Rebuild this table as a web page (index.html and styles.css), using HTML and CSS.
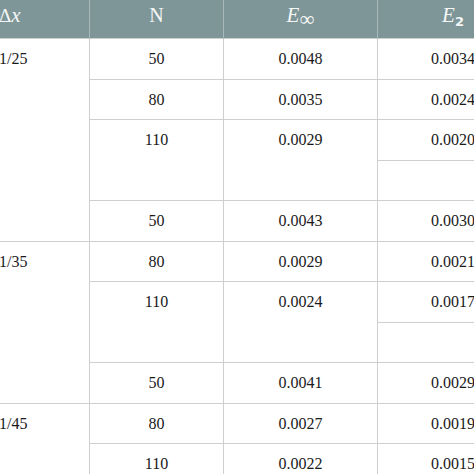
FILE: index.html
```html
<!DOCTYPE html>
<html>
<head>
<meta charset="utf-8">
<link rel="stylesheet" href="styles.css">
</head>
<body>
<div class="frame">
<table class="grid">
  <colgroup>
    <col class="c1"><col class="c2"><col class="c3"><col class="c4">
  </colgroup>
  <thead>
    <tr>
      <th class="left"><span class="delta">Δ</span><i class="var">x</i></th>
      <th>N</th>
      <th><i class="var">E</i><sub class="inf">∞</sub></th>
      <th><i class="var">E</i><sub class="two">2</sub></th>
    </tr>
  </thead>
  <tbody>
    <tr><td class="left" rowspan="5">1/25</td><td>50</td><td>0.0048</td><td>0.0034</td></tr>
    <tr><td>80</td><td>0.0035</td><td>0.0024</td></tr>
    <tr><td rowspan="2">110</td><td rowspan="2">0.0029</td><td>0.0020</td></tr>
    <tr><td></td></tr>
    <tr><td>50</td><td>0.0043</td><td>0.0030</td></tr>
    <tr><td class="left" rowspan="4">1/35</td><td>80</td><td>0.0029</td><td>0.0021</td></tr>
    <tr><td rowspan="2">110</td><td rowspan="2">0.0024</td><td>0.0017</td></tr>
    <tr><td></td></tr>
    <tr><td>50</td><td>0.0041</td><td>0.0029</td></tr>
    <tr><td class="left" rowspan="2">1/45</td><td>80</td><td>0.0027</td><td>0.0019</td></tr>
    <tr><td>110</td><td>0.0022</td><td>0.0015</td></tr>
  </tbody>
</table>
</div>
</body>
</html>
```
FILE: styles.css
```css
html, body {
  margin: 0;
  padding: 0;
  background: #ffffff;
}
.frame {
  width: 474px;
  height: 474px;
  overflow: hidden;
}
.grid {
  margin-left: -10px;
  border-collapse: collapse;
  table-layout: fixed;
  width: 538px;
  font-family: "Liberation Serif", "Times New Roman", serif;
  font-size: 16px;
  color: #1a1a1a;
}
.c1 { width: 99px; }
.c2 { width: 134px; }
.c3 { width: 154px; }
.c4 { width: 151px; }
.grid th {
  background: #7f9698;
  color: #f4f7f7;
  font-weight: normal;
  font-size: 20px;
  line-height: 24px;
  height: 37px;
  box-sizing: border-box;
  padding: 3px 0 10px;
  vertical-align: top;
  text-align: center;
  border-left: 1px solid #a9b9ba;
  border-right: 1px solid #a9b9ba;
}
.grid th.left {
  text-align: left;
  padding-left: 8px;
}
.delta { font-size: 19px; }
.var {
  font-style: italic;
  font-size: 21px;
}
.inf {
  font-size: 21px;
  vertical-align: -4px;
  line-height: 0;
}
.two {
  font-family: "DejaVu Sans", sans-serif;
  font-weight: bold;
  font-size: 13px;
  vertical-align: -4px;
  line-height: 0;
}
.grid td {
  height: 40.5px;
  box-sizing: border-box;
  padding: 9px 0 0;
  line-height: 22px;
  vertical-align: top;
  text-align: center;
  border: 1px solid #cfcfcf;
}
.grid td.left {
  text-align: left;
  padding-left: 8px;
}
```
